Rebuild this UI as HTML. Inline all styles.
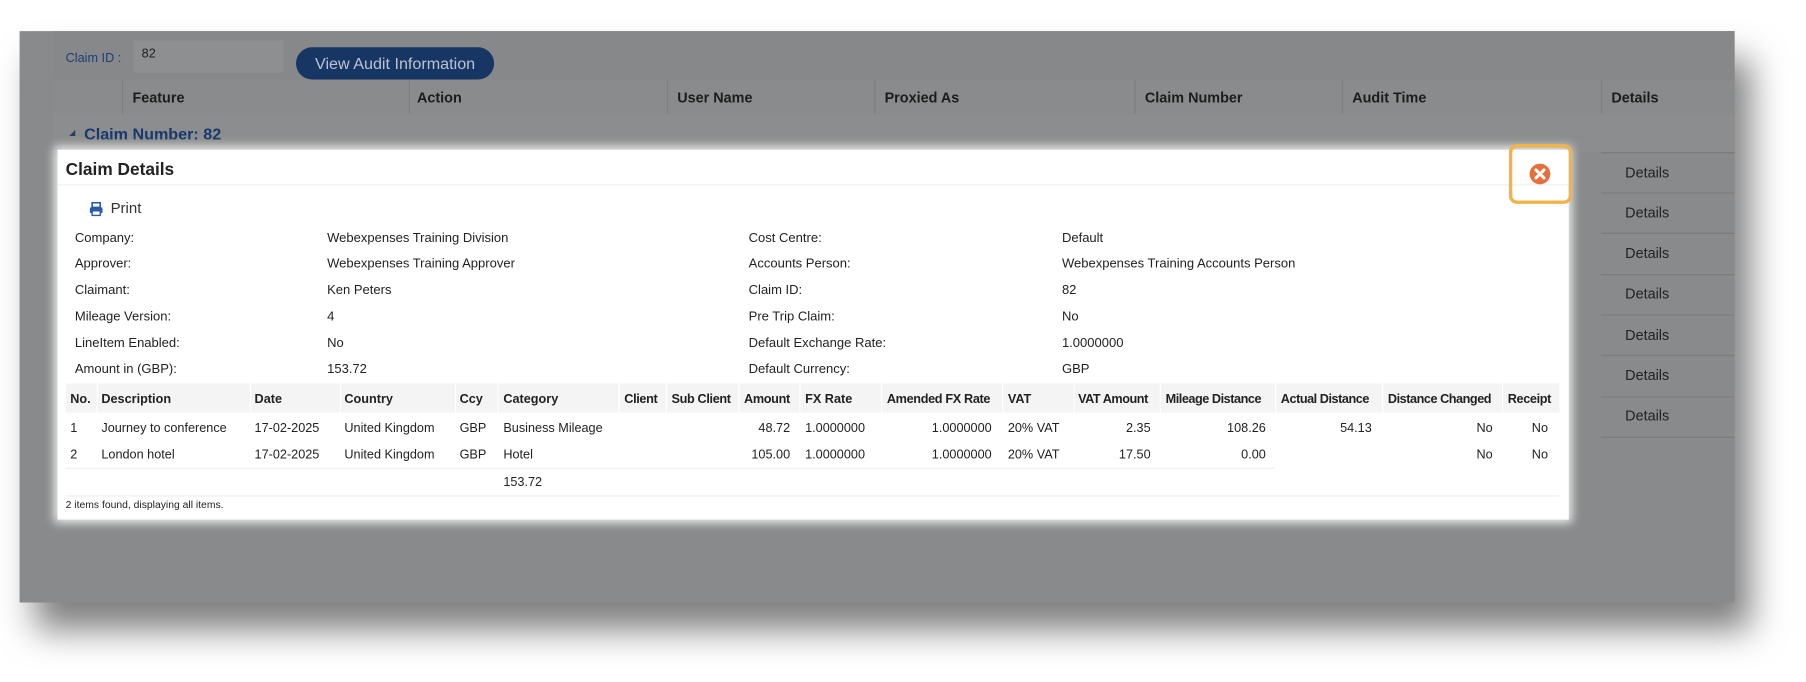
<!DOCTYPE html>
<html><head><meta charset="utf-8"><style>
html,body{margin:0;padding:0;background:#fff;width:1806px;height:682px;overflow:hidden}
#s{position:absolute;left:0;top:0;width:1568px;height:592px;transform:scale(1.15179,1.152);transform-origin:0 0;font-family:"Liberation Sans",sans-serif;color:#222}
.a{position:absolute;white-space:nowrap}
.g{position:absolute;left:17px;top:27px;width:1489px;height:496px;background:#898a8b;box-shadow:14px 24px 28px rgba(0,0,0,.5)}
.hd{font-size:12.5px;font-weight:bold;color:#1c1c1c;top:78px}
.sep{position:absolute;width:1px;background:#7f8081}
.hl{position:absolute;left:1390px;width:116px;height:1px;background:#7a7b7c}
.dt{font-size:12.5px;color:#222;left:1411px}
.m{position:absolute;left:50px;top:130px;width:1312px;height:321px;background:#fff;box-shadow:0 0 8px 3px rgba(255,255,255,.85)}
.l{font-size:11.3px;color:#222}
.t{font-size:11px;color:#222}
.th{font-size:11px;font-weight:bold;color:#222;top:341px}
.cs{position:absolute;top:333px;height:25px;width:1px;background:#fff}
.r{text-align:right}
</style></head><body><div id="s">
<div class="g"></div>
<div style="position:absolute;left:46px;top:27px;width:1460px;height:42px;background:#878889"></div>
<div style="position:absolute;left:46px;top:69px;width:1460px;height:30px;background:#8a8b8c"></div>
<div style="position:absolute;left:46px;top:99px;width:1460px;height:33px;background:#8c8d8e"></div>
<div class="a" style="left:57px;top:45px;font-size:11px;color:#1f3f73">Claim ID :</div>
<div style="position:absolute;left:116px;top:35px;width:130px;height:28px;background:#8e8f90"></div>
<div class="a" style="left:123px;top:41px;font-size:11px;color:#222">82</div>
<div style="position:absolute;left:257px;top:41px;width:172px;height:28px;border-radius:14px;background:#183664"></div>
<div class="a" style="left:257px;top:47px;width:172px;text-align:center;font-size:14px;color:#b9c3d3">View Audit Information</div>
<div class="sep" style="left:106px;top:69px;height:30px"></div>
<div class="sep" style="left:355px;top:69px;height:30px"></div>
<div class="sep" style="left:579px;top:69px;height:30px"></div>
<div class="sep" style="left:759px;top:69px;height:30px"></div>
<div class="sep" style="left:985px;top:69px;height:30px"></div>
<div class="sep" style="left:1165px;top:69px;height:30px"></div>
<div class="sep" style="left:1390px;top:69px;height:30px"></div>
<div class="a hd" style="left:115px">Feature</div>
<div class="a hd" style="left:362px">Action</div>
<div class="a hd" style="left:588px">User Name</div>
<div class="a hd" style="left:768px">Proxied As</div>
<div class="a hd" style="left:994px">Claim Number</div>
<div class="a hd" style="left:1174px">Audit Time</div>
<div class="a hd" style="left:1399px">Details</div>
<div class="a" style="left:60px;top:111px;font-size:7px;color:#2a3f5e">◢</div>
<div class="a" style="left:73px;top:108px;font-size:14px;font-weight:bold;color:#17386b">Claim Number: 82</div>
<div class="hl" style="top:132px"></div><div class="hl" style="top:167px"></div><div class="hl" style="top:202px"></div><div class="hl" style="top:238px"></div><div class="hl" style="top:273px"></div><div class="hl" style="top:308px"></div><div class="hl" style="top:344px"></div><div class="hl" style="top:379px"></div>
<div class="a dt" style="top:143px">Details</div><div class="a dt" style="top:178px">Details</div><div class="a dt" style="top:213px">Details</div><div class="a dt" style="top:248px">Details</div><div class="a dt" style="top:284px">Details</div><div class="a dt" style="top:319px">Details</div><div class="a dt" style="top:354px">Details</div>
<div class="m"></div>
<div class="a" style="left:57px;top:139px;font-size:15px;font-weight:bold;color:#222">Claim Details</div>
<div style="position:absolute;left:50px;top:160px;width:1312px;height:1px;background:#eee"></div>
<div style="position:absolute;left:1310px;top:125px;width:49px;height:46px;border:3px solid #efb44c;border-radius:7px"></div>
<svg style="position:absolute;left:1327px;top:141px" width="20" height="20" viewBox="0 0 20 20"><circle cx="10" cy="10" r="9" fill="#e5703d"/><path d="M6.5 6.5L13.5 13.5M13.5 6.5L6.5 13.5" stroke="#fff" stroke-width="2.6" stroke-linecap="round"/></svg>
<svg style="position:absolute;left:77px;top:175px" width="13" height="13" viewBox="0 0 13 13"><rect x="3" y="1" width="7" height="4" fill="none" stroke="#2d5aa8" stroke-width="1.4"/><rect x="1" y="5" width="11" height="5" rx="1" fill="#2d5aa8"/><rect x="3" y="8" width="7" height="4" fill="#fff" stroke="#2d5aa8" stroke-width="1.2"/></svg>
<div class="a" style="left:96px;top:173px;font-size:13px;color:#333">Print</div>
<div class="a l" style="left:65px;top:201px">Company:</div><div class="a l" style="left:284px;top:201px">Webexpenses Training Division</div>
<div class="a l" style="left:65px;top:223px">Approver:</div><div class="a l" style="left:284px;top:223px">Webexpenses Training Approver</div>
<div class="a l" style="left:65px;top:246px">Claimant:</div><div class="a l" style="left:284px;top:246px">Ken Peters</div>
<div class="a l" style="left:65px;top:269px">Mileage Version:</div><div class="a l" style="left:284px;top:269px">4</div>
<div class="a l" style="left:65px;top:292px">LineItem Enabled:</div><div class="a l" style="left:284px;top:292px">No</div>
<div class="a l" style="left:65px;top:315px">Amount in (GBP):</div><div class="a l" style="left:284px;top:315px">153.72</div>
<div class="a l" style="left:650px;top:201px">Cost Centre:</div><div class="a l" style="left:922px;top:201px">Default</div>
<div class="a l" style="left:650px;top:223px">Accounts Person:</div><div class="a l" style="left:922px;top:223px">Webexpenses Training Accounts Person</div>
<div class="a l" style="left:650px;top:246px">Claim ID:</div><div class="a l" style="left:922px;top:246px">82</div>
<div class="a l" style="left:650px;top:269px">Pre Trip Claim:</div><div class="a l" style="left:922px;top:269px">No</div>
<div class="a l" style="left:650px;top:292px">Default Exchange Rate:</div><div class="a l" style="left:922px;top:292px">1.0000000</div>
<div class="a l" style="left:650px;top:315px">Default Currency:</div><div class="a l" style="left:922px;top:315px">GBP</div>
<div style="position:absolute;left:57px;top:333px;width:1297px;height:25px;background:#f4f4f4"></div>
<div class="cs" style="left:84px"></div><div class="cs" style="left:217px"></div><div class="cs" style="left:295px"></div><div class="cs" style="left:395px"></div><div class="cs" style="left:432px"></div><div class="cs" style="left:537px"></div><div class="cs" style="left:578px"></div><div class="cs" style="left:641px"></div><div class="cs" style="left:694px"></div><div class="cs" style="left:765px"></div><div class="cs" style="left:870px"></div><div class="cs" style="left:932px"></div><div class="cs" style="left:1007px"></div><div class="cs" style="left:1107px"></div><div class="cs" style="left:1200px"></div><div class="cs" style="left:1304px"></div>
<div class="a th" style="left:61px">No.</div><div class="a th" style="left:88px">Description</div><div class="a th" style="left:221px">Date</div><div class="a th" style="left:299px">Country</div><div class="a th" style="left:399px">Ccy</div><div class="a th" style="left:437px">Category</div><div class="a th" style="left:542px;letter-spacing:-.3px">Client</div><div class="a th" style="left:583px;letter-spacing:-.3px">Sub Client</div><div class="a th" style="left:646px;letter-spacing:-.3px">Amount</div><div class="a th" style="left:699px">FX Rate</div><div class="a th" style="left:770px;letter-spacing:-.3px">Amended FX Rate</div><div class="a th" style="left:875px">VAT</div><div class="a th" style="left:936px;letter-spacing:-.4px">VAT Amount</div><div class="a th" style="left:1012px;letter-spacing:-.4px">Mileage Distance</div><div class="a th" style="left:1112px;letter-spacing:-.4px">Actual Distance</div><div class="a th" style="left:1205px;letter-spacing:-.4px">Distance Changed</div><div class="a th" style="left:1309px;letter-spacing:-.3px">Receipt</div>
<div class="a t" style="left:61px;top:366px">1</div><div class="a t" style="left:88px;top:366px">Journey to conference</div><div class="a t" style="left:221px;top:366px">17-02-2025</div><div class="a t" style="left:299px;top:366px">United Kingdom</div><div class="a t" style="left:399px;top:366px">GBP</div><div class="a t" style="left:437px;top:366px">Business Mileage</div>
<div class="a t r" style="right:882px;top:366px">48.72</div><div class="a t" style="left:699px;top:366px">1.0000000</div><div class="a t r" style="right:707px;top:366px">1.0000000</div><div class="a t" style="left:875px;top:366px">20% VAT</div><div class="a t r" style="right:569px;top:366px">2.35</div><div class="a t r" style="right:469px;top:366px">108.26</div><div class="a t r" style="right:377px;top:366px">54.13</div><div class="a t r" style="right:272px;top:366px">No</div><div class="a t r" style="right:224px;top:366px">No</div>
<div class="a t" style="left:61px;top:389px">2</div><div class="a t" style="left:88px;top:389px">London hotel</div><div class="a t" style="left:221px;top:389px">17-02-2025</div><div class="a t" style="left:299px;top:389px">United Kingdom</div><div class="a t" style="left:399px;top:389px">GBP</div><div class="a t" style="left:437px;top:389px">Hotel</div>
<div class="a t r" style="right:882px;top:389px">105.00</div><div class="a t" style="left:699px;top:389px">1.0000000</div><div class="a t r" style="right:707px;top:389px">1.0000000</div><div class="a t" style="left:875px;top:389px">20% VAT</div><div class="a t r" style="right:569px;top:389px">17.50</div><div class="a t r" style="right:469px;top:389px">0.00</div><div class="a t r" style="right:272px;top:389px">No</div><div class="a t r" style="right:224px;top:389px">No</div>
<div style="position:absolute;left:57px;top:406px;width:1050px;height:1px;background:#eee"></div>
<div class="a t" style="left:437px;top:413px">153.72</div>
<div style="position:absolute;left:57px;top:430px;width:1297px;height:1px;background:#eee"></div>
<div class="a" style="left:57px;top:433px;font-size:9px;color:#222">2 items found, displaying all items.</div>
</div></body></html>
